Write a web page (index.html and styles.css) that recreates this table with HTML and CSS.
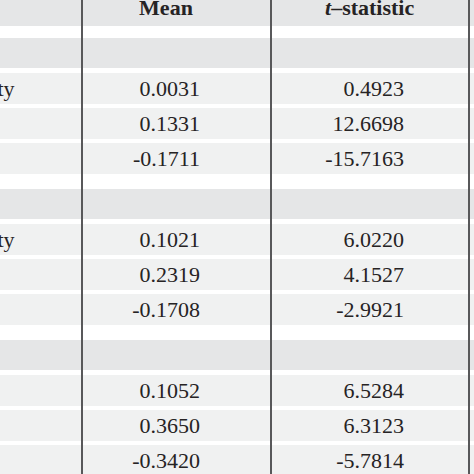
FILE: index.html
```html
<!DOCTYPE html>
<html lang="en">
<head>
<meta charset="utf-8">
<title>Mean and t-statistic</title>
<link rel="stylesheet" href="styles.css">
</head>
<body>
<div class="table">
  <div class="cell head c-label"></div>
  <div class="cell head c-mean">Mean</div>
  <div class="cell head c-t"><i>t</i>–statistic</div>
  <div class="cell head c-extra"></div>

  <div class="cell sec c-label"></div>
  <div class="cell sec c-mean"></div>
  <div class="cell sec c-t"></div>
  <div class="cell sec c-extra"></div>

  <div class="cell row c-label">Volatility</div>
  <div class="cell row c-mean">0.0031</div>
  <div class="cell row c-t">0.4923</div>
  <div class="cell row c-extra"></div>

  <div class="cell row c-label">Size</div>
  <div class="cell row c-mean">0.1331</div>
  <div class="cell row c-t">12.6698</div>
  <div class="cell row c-extra"></div>

  <div class="cell row last c-label">Beta</div>
  <div class="cell row last c-mean">-0.1711</div>
  <div class="cell row last c-t">-15.7163</div>
  <div class="cell row last c-extra"></div>

  <div class="cell sec c-label"></div>
  <div class="cell sec c-mean"></div>
  <div class="cell sec c-t"></div>
  <div class="cell sec c-extra"></div>

  <div class="cell row c-label">Volatility</div>
  <div class="cell row c-mean">0.1021</div>
  <div class="cell row c-t">6.0220</div>
  <div class="cell row c-extra"></div>

  <div class="cell row c-label">Size</div>
  <div class="cell row c-mean">0.2319</div>
  <div class="cell row c-t">4.1527</div>
  <div class="cell row c-extra"></div>

  <div class="cell row last c-label">Beta</div>
  <div class="cell row last c-mean">-0.1708</div>
  <div class="cell row last c-t">-2.9921</div>
  <div class="cell row last c-extra"></div>

  <div class="cell sec c-label"></div>
  <div class="cell sec c-mean"></div>
  <div class="cell sec c-t"></div>
  <div class="cell sec c-extra"></div>

  <div class="cell row c-label">Value</div>
  <div class="cell row c-mean">0.1052</div>
  <div class="cell row c-t">6.5284</div>
  <div class="cell row c-extra"></div>

  <div class="cell row c-label">Size</div>
  <div class="cell row c-mean">0.3650</div>
  <div class="cell row c-t">6.3123</div>
  <div class="cell row c-extra"></div>

  <div class="cell row last c-label">Beta</div>
  <div class="cell row last c-mean">-0.3420</div>
  <div class="cell row last c-t">-5.7814</div>
  <div class="cell row last c-extra"></div>
</div>
</body>
</html>
```

FILE: styles.css
```css
html, body {
  margin: 0;
  padding: 0;
  overflow: hidden;
  background: #ffffff;
}

body {
  font-family: "Liberation Serif", "Times New Roman", serif;
  font-size: 22px;
  color: #262324;
}

.table {
  display: grid;
  grid-template-columns: 203px 189px 198px 100px;
  width: max-content;
  margin-left: -120px;
}

.cell {
  box-sizing: border-box;
  border-right: 2px solid #58585a;
  white-space: nowrap;
  overflow: hidden;
}

.c-extra {
  border-right: none;
}

/* header row */
.head {
  background: #e5e6e7;
  line-height: 16px;
  padding-top: 0;
  padding-bottom: 22px;
  box-shadow: inset 0 -12px 0 #ffffff;
  font-weight: bold;
}

.head.c-mean {
  text-align: center;
  padding-left: 49px;
  padding-right: 70px;
}

.head.c-t {
  text-align: center;
  padding-left: 53px;
  padding-right: 64px;
}

/* section band */
.sec {
  background: #e5e6e7;
  height: 35px;
  box-shadow: inset 0 -5px 0 #ffffff;
}

/* data rows */
.row {
  background: #f0f1f1;
  line-height: 30px;
  padding-top: 1px;
  padding-bottom: 4px;
  box-shadow: inset 0 -4px 0 #ffffff;
}

.row.last {
  padding-bottom: 15px;
  box-shadow: inset 0 -15px 0 #ffffff;
}

.row.c-label {
  padding-left: 53px;
  text-align: left;
}

.row.c-mean {
  text-align: right;
  padding-right: 70px;
}

.row.c-t {
  text-align: right;
  padding-right: 64px;
}
```
